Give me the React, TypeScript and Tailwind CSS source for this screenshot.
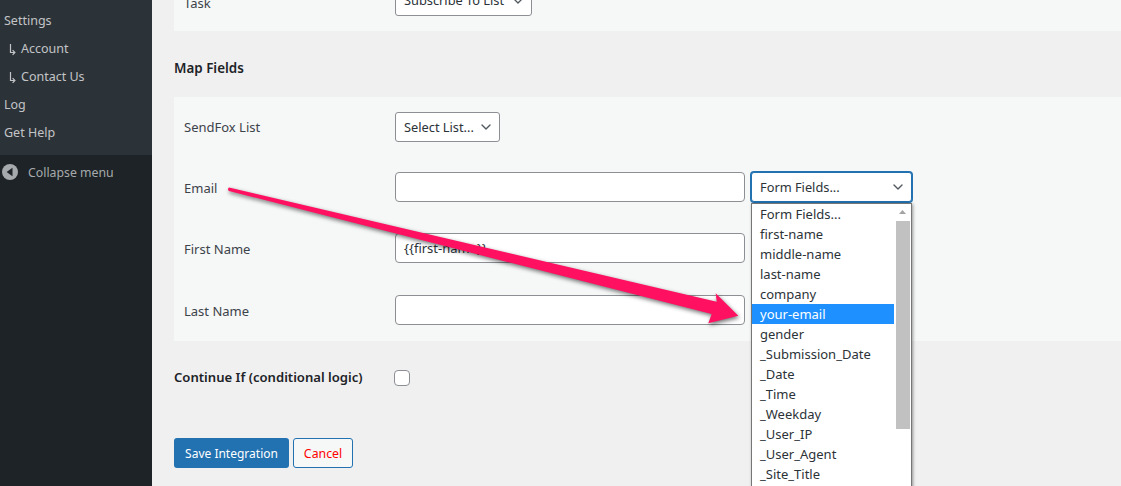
import React from 'react'
import { ChevronDown } from 'lucide-react'

const font = { fontFamily: '"Noto Sans", "Open Sans", sans-serif' }

const options = [
  'Form Fields...',
  'first-name',
  'middle-name',
  'last-name',
  'company',
  'your-email',
  'gender',
  '_Submission_Date',
  '_Date',
  '_Time',
  '_Weekday',
  '_User_IP',
  '_User_Agent',
  '_Site_Title',
]

const sideItems = [
  { name: 'Settings' },
  { name: 'Account', sub: true },
  { name: 'Contact Us', sub: true },
  { name: 'Log' },
  { name: 'Get Help' },
]

function SelectBox({ label, width, focused }: { label: string; width: string; focused?: boolean }) {
  return (
    <div
      className={`${width} h-[30px] flex items-center justify-between pl-2 pr-[5px] rounded-[3px] bg-white text-[#2c3338] shrink-0 border ${
        focused ? 'border-[#2271b1] shadow-[0_0_0_1px_#2271b1]' : 'border-[#8c8f94]'
      }`}
    >
      <span className="pt-[2px] text-[12.8px]">{label}</span>
      <ChevronDown size={16} strokeWidth={2} className="text-[#50575e]" />
    </div>
  )
}

function TextInput({ value }: { value?: string }) {
  return (
    <div className="w-[350px] h-[30px] flex items-center px-2 pt-[2px] rounded-[4px] bg-white border border-[#8c8f94] text-[#2c3338] shrink-0">
      {value}
    </div>
  )
}

function Row({ label, className, lift, children }: { label: string; className: string; lift: string; children: React.ReactNode }) {
  return (
    <div className={`flex items-center ${className}`}>
      <div className={`w-[221px] pl-[10px] text-[#3c434a] ${lift}`}>{label}</div>
      {children}
    </div>
  )
}

export default function App() {
  return (
    <div className="flex w-[1121px] h-[486px] overflow-hidden relative bg-[#f0f0f1] text-[13px]" style={font}>
      {/* Sidebar */}
      <aside className="w-[152px] bg-[#1d2327] shrink-0 flex flex-col">
        <nav className="bg-[#2c3338] pt-[6px] h-[155px] text-[#c3c4c7] text-[12.5px]">
          {sideItems.map((item) => (
            <div key={item.name} className={`h-[28px] flex items-center ${item.sub ? 'pl-[9px]' : 'pl-[4px]'}`}>
              {item.sub && (
                <svg width="12" height="13" viewBox="0 0 12 13" className="shrink-0 mt-[2px]" fill="none" stroke="#c3c4c7" strokeWidth="1.2">
                  <path d="M1.5 1v8.5h3.5" />
                  <path d="M3.6 7.2l2.3 2.3-2.3 2.3" />
                </svg>
              )}
              <span className="pt-[2px]">{item.name}</span>
            </div>
          ))}
        </nav>
        <div className="flex items-center gap-[10px] pl-[2px] h-[34px] text-[#a7aaad] text-[12.3px]">
          <svg width="16" height="16" viewBox="0 0 16 16">
            <circle cx="8" cy="8" r="8" fill="#a7aaad" />
            <path d="M10.5 3.8v8.4L4.6 8z" fill="#1d2327" />
          </svg>
          <span className="pt-[2px]">Collapse menu</span>
        </div>
      </aside>

      {/* Main form */}
      <main className="flex-1 pl-[22px] flex flex-col">
        <div className="h-[31px] bg-[#f6f7f7] flex overflow-hidden">
          <div className="w-[221px] pl-[10px] text-[#3c434a] -mt-[6px] leading-[18px]">Task</div>
          <div className="w-[137px] h-[30px] -mt-[14px] flex items-center justify-between pl-2 pr-[5px] rounded-[3px] bg-white border border-[#8c8f94] text-[#2c3338]">
            <span className="text-[12.8px]">Subscribe To List</span>
            <ChevronDown size={16} strokeWidth={2} className="text-[#50575e]" />
          </div>
        </div>

        <h2 className="h-[66px] flex items-center pt-[8px] text-[13.4px] font-semibold text-[#1d2327]">Map Fields</h2>

        <section className="h-[244px] bg-[#f6f7f7] pt-[15px]">
          <Row label="SendFox List" className="mb-[30px]" lift="pt-[2px]">
            <SelectBox label="Select List..." width="w-[105px]" />
          </Row>
          <Row label="Email" className="mb-[31px]" lift="pt-[4px]">
            <TextInput />
            <div className="w-[6px]" />
            <SelectBox label="Form Fields..." width="w-[161px]" focused />
          </Row>
          <Row label="First Name" className="mb-[32px]" lift="pt-[4px]">
            <TextInput value="{{first-name}}" />
          </Row>
          <Row label="Last Name" className="" lift="pt-[4px]">
            <TextInput />
          </Row>
        </section>

        <div className="flex items-center mt-[28px] h-[18px]">
          <span className="w-[220px] text-[13.1px] font-semibold text-[#1d2327]">Continue If (conditional logic)</span>
          <span className="w-4 h-4 rounded-[4px] bg-white border border-[#8c8f94]" />
        </div>

        <div className="flex gap-1 mt-[51px]">
          <button className="w-[115px] h-[30px] pt-[2px] rounded-[3px] bg-[#2271b1] text-white text-[12px]">Save Integration</button>
          <button className="w-[60px] h-[30px] pt-[2px] rounded-[3px] bg-[#f6f7f7] border border-[#2271b1] text-[#ff0000] text-[12.3px]">Cancel</button>
        </div>
      </main>

      {/* Open dropdown list */}
      <div className="absolute left-[751px] top-[203px] w-[161px] h-[290px] bg-white border border-[#767676] shadow-[1px_1px_3px_rgba(0,0,0,0.4)] flex">
        <ul className="w-[142px] text-[#2c3338]">
          {options.map((o) => (
            <li
              key={o}
              className={`h-[20px] leading-[20px] pl-2 ${o === 'your-email' ? 'bg-[#1e90ff] text-white' : ''}`}
            >
              {o}
            </li>
          ))}
        </ul>
        <div className="w-[17px] flex flex-col items-center">
          <svg width="9" height="17" viewBox="0 0 9 17" className="shrink-0">
            <path d="M4.5 6L8 10H1z" fill="#a3a3a3" />
          </svg>
          <div className="w-[14px] h-[208px] bg-[#c1c1c1]" />
        </div>
      </div>

      {/* Annotation arrow */}
      <svg className="absolute inset-0 pointer-events-none drop-shadow-[1px_2px_2px_rgba(0,0,0,0.55)]" width="1121" height="486" viewBox="0 0 1121 486">
        <path d="M229 187.5L716.7 301.7L715.7 293.3L738.3 315.7L708.3 323.3L711.7 314L229 191Q227 189.2 229 187.5Z" fill="#ff1060" />
      </svg>
    </div>
  )
}
